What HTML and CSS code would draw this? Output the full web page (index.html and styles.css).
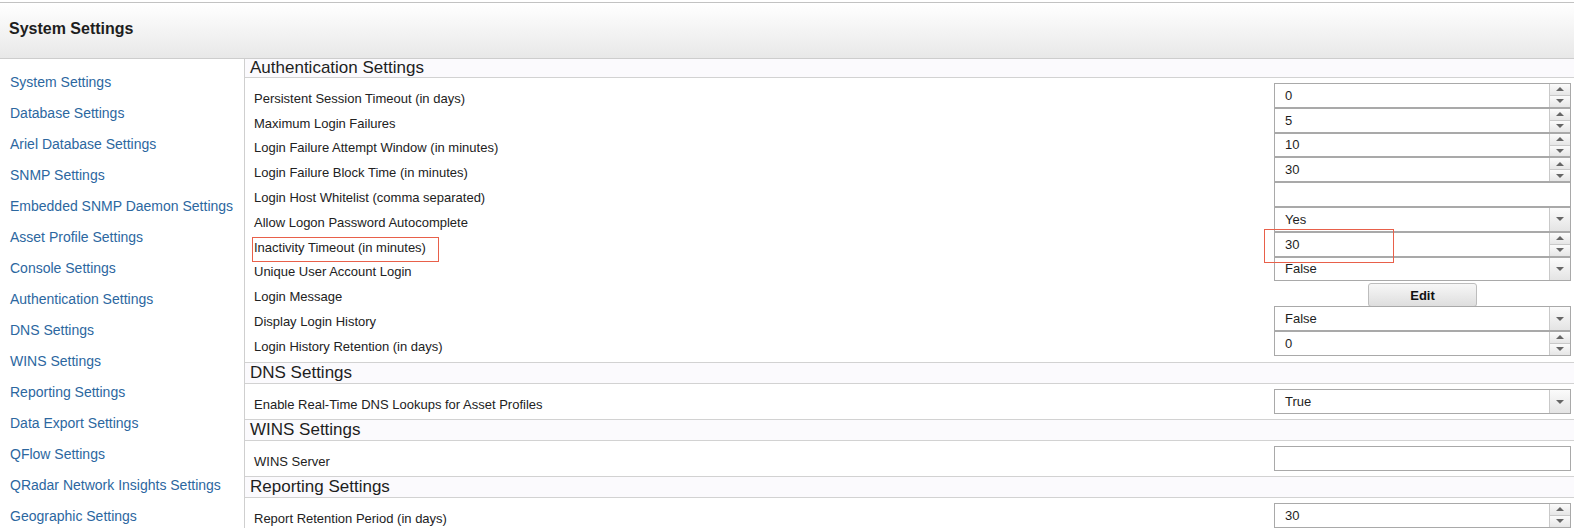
FILE: index.html
```html
<!DOCTYPE html>
<html lang="en">
<head>
<meta charset="utf-8">
<title>System Settings</title>
<link rel="stylesheet" href="styles.css">
</head>
<body>
<header class="topbar"><h1 class="title">System Settings</h1></header>
<div class="layout">
  <nav class="sidebar">
    <a class="nav-link" href="#">System Settings</a>
    <a class="nav-link" href="#">Database Settings</a>
    <a class="nav-link" href="#">Ariel Database Settings</a>
    <a class="nav-link" href="#">SNMP Settings</a>
    <a class="nav-link" href="#">Embedded SNMP Daemon Settings</a>
    <a class="nav-link" href="#">Asset Profile Settings</a>
    <a class="nav-link" href="#">Console Settings</a>
    <a class="nav-link" href="#">Authentication Settings</a>
    <a class="nav-link" href="#">DNS Settings</a>
    <a class="nav-link" href="#">WINS Settings</a>
    <a class="nav-link" href="#">Reporting Settings</a>
    <a class="nav-link" href="#">Data Export Settings</a>
    <a class="nav-link" href="#">QFlow Settings</a>
    <a class="nav-link" href="#">QRadar Network Insights Settings</a>
    <a class="nav-link" href="#">Geographic Settings</a>
  </nav>
  <main class="content">
    <section class="group">
      <h2 class="group-title group-title--first">Authentication Settings</h2>
      <div class="rows rows--long">
        <div class="row"><div class="label">Persistent Session Timeout (in days)</div><div class="control"><div class="field"><span class="value">0</span><span class="spinner"><span class="spin-half"><span class="tri-up"></span></span><span class="spin-half"><span class="tri-down"></span></span></span></div></div></div>
        <div class="row"><div class="label">Maximum Login Failures</div><div class="control"><div class="field"><span class="value">5</span><span class="spinner"><span class="spin-half"><span class="tri-up"></span></span><span class="spin-half"><span class="tri-down"></span></span></span></div></div></div>
        <div class="row"><div class="label">Login Failure Attempt Window (in minutes)</div><div class="control"><div class="field"><span class="value">10</span><span class="spinner"><span class="spin-half"><span class="tri-up"></span></span><span class="spin-half"><span class="tri-down"></span></span></span></div></div></div>
        <div class="row"><div class="label">Login Failure Block Time (in minutes)</div><div class="control"><div class="field"><span class="value">30</span><span class="spinner"><span class="spin-half"><span class="tri-up"></span></span><span class="spin-half"><span class="tri-down"></span></span></span></div></div></div>
        <div class="row"><div class="label">Login Host Whitelist (comma separated)</div><div class="control"><div class="field"><span class="value"></span></div></div></div>
        <div class="row"><div class="label">Allow Logon Password Autocomplete</div><div class="control"><div class="field"><span class="value">Yes</span><span class="drop"><span class="tri-down"></span></span></div></div></div>
        <div class="row"><div class="label label--marked">Inactivity Timeout (in minutes)<span class="mark mark--label"></span></div><div class="control control--marked"><div class="field"><span class="value">30</span><span class="spinner"><span class="spin-half"><span class="tri-up"></span></span><span class="spin-half"><span class="tri-down"></span></span></span></div><span class="mark mark--field"></span></div></div>
        <div class="row"><div class="label">Unique User Account Login</div><div class="control"><div class="field"><span class="value">False</span><span class="drop"><span class="tri-down"></span></span></div></div></div>
        <div class="row"><div class="label">Login Message</div><div class="control control--center"><button class="btn" type="button">Edit</button></div></div>
        <div class="row"><div class="label">Display Login History</div><div class="control"><div class="field"><span class="value">False</span><span class="drop"><span class="tri-down"></span></span></div></div></div>
        <div class="row"><div class="label">Login History Retention (in days)</div><div class="control"><div class="field"><span class="value">0</span><span class="spinner"><span class="spin-half"><span class="tri-up"></span></span><span class="spin-half"><span class="tri-down"></span></span></span></div></div></div>
      </div>
    </section>
    <section class="group">
      <h2 class="group-title">DNS Settings</h2>
      <div class="rows">
        <div class="row"><div class="label">Enable Real-Time DNS Lookups for Asset Profiles</div><div class="control"><div class="field"><span class="value">True</span><span class="drop"><span class="tri-down"></span></span></div></div></div>
      </div>
    </section>
    <section class="group">
      <h2 class="group-title">WINS Settings</h2>
      <div class="rows">
        <div class="row"><div class="label">WINS Server</div><div class="control"><div class="field"><span class="value"></span></div></div></div>
      </div>
    </section>
    <section class="group">
      <h2 class="group-title">Reporting Settings</h2>
      <div class="rows">
        <div class="row"><div class="label">Report Retention Period (in days)</div><div class="control"><div class="field"><span class="value">30</span><span class="spinner"><span class="spin-half"><span class="tri-up"></span></span><span class="spin-half"><span class="tri-down"></span></span></span></div></div></div>
      </div>
    </section>
  </main>
</div>
</body>
</html>
```
FILE: styles.css
```css
html, body {
  margin: 0;
  padding: 0;
  background: #ffffff;
  font-family: "Liberation Sans", Arial, Helvetica, sans-serif;
  color: #222222;
}

.topbar {
  box-sizing: border-box;
  margin-top: 2px;
  height: 57px;
  border-top: 1px solid #c2c2c2;
  border-bottom: 1px solid #cdcdcd;
  background: linear-gradient(#ffffff 0%, #f5f5f5 45%, #e8e8e8 100%);
  display: flex;
  align-items: center;
  padding: 0 0 4px 9px;
}

.title {
  margin: 0;
  font-size: 16px;
  font-weight: bold;
  color: #1e1e1e;
}

.layout {
  display: flex;
  align-items: stretch;
  min-height: 469px;
}

.sidebar {
  width: 244px;
  flex: 0 0 244px;
  border-right: 1px solid #cfcfcf;
  padding-top: 8px;
  display: flex;
  flex-direction: column;
}

.nav-link {
  display: block;
  padding-left: 10px;
  line-height: 31px;
  font-size: 14px;
  color: #2c679f;
  text-decoration: none;
  white-space: nowrap;
}

.content {
  flex: 1;
  min-width: 0;
}

.group-title {
  margin: 0;
  box-sizing: border-box;
  height: 22px;
  padding-left: 5px;
  border-top: 1px solid #d2d2d2;
  border-bottom: 1px solid #d2d2d2;
  background: #fbfafd;
  font-size: 17px;
  font-weight: normal;
  line-height: 20px;
  color: #1e1e1e;
}

.group-title--first {
  height: 19px;
  border-top: 0;
  line-height: 18px;
}

.rows {
  padding: 5px 3px 5px 9px;
}

.rows--long {
  padding-bottom: 6.5px;
}

.row {
  display: grid;
  grid-template-columns: 1fr 297px;
  height: 24.8px;
}

.label {
  box-sizing: border-box;
  padding-top: 6px;
  height: 24.8px;
  display: flex;
  align-items: center;
  font-size: 13px;
  color: #222222;
  white-space: nowrap;
}

.label--marked,
.control--marked {
  position: relative;
}

.control {
  display: flex;
  align-items: stretch;
}

.control--center {
  justify-content: center;
  align-items: flex-start;
}

.field {
  box-sizing: border-box;
  flex: 1;
  height: 24.8px;
  border: 1px solid #a9a9a9;
  background: #ffffff;
  display: flex;
  align-items: stretch;
}

.value {
  flex: 1;
  padding-left: 10px;
  display: flex;
  align-items: center;
  font-size: 13px;
  color: #1e1e1e;
}

.spinner {
  width: 20px;
  display: flex;
  flex-direction: column;
  border-left: 1px solid #c9c9c9;
}

.spin-half {
  flex: 1;
  display: flex;
  align-items: center;
  justify-content: center;
  background: linear-gradient(#fbfbfb, #e6e6e6);
}

.spin-half + .spin-half {
  border-top: 1px solid #c9c9c9;
}

.drop {
  width: 20px;
  border-left: 1px solid #c9c9c9;
  background: linear-gradient(#fbfbfb, #e4e4e4);
  display: flex;
  align-items: center;
  justify-content: center;
}

.tri-up {
  width: 0;
  height: 0;
  border-left: 4px solid transparent;
  border-right: 4px solid transparent;
  border-bottom: 4px solid #666666;
}

.tri-down {
  width: 0;
  height: 0;
  border-left: 4px solid transparent;
  border-right: 4px solid transparent;
  border-top: 4px solid #666666;
}

.btn {
  margin-top: 2px;
  width: 109px;
  height: 24px;
  border: 1px solid #bdbdbd;
  border-radius: 3px;
  background: linear-gradient(#f7f7f7, #dedede);
  font-family: "Liberation Sans", Arial, Helvetica, sans-serif;
  font-size: 13px;
  font-weight: bold;
  color: #111111;
  padding: 0;
}

.mark {
  position: absolute;
  box-sizing: border-box;
  border: 1px solid #e8604a;
  pointer-events: none;
}

.mark--label {
  left: -2px;
  top: 5.5px;
  width: 187px;
  height: 25px;
}

.mark--field {
  left: -10px;
  top: -2.5px;
  width: 130px;
  height: 33.5px;
}
```
